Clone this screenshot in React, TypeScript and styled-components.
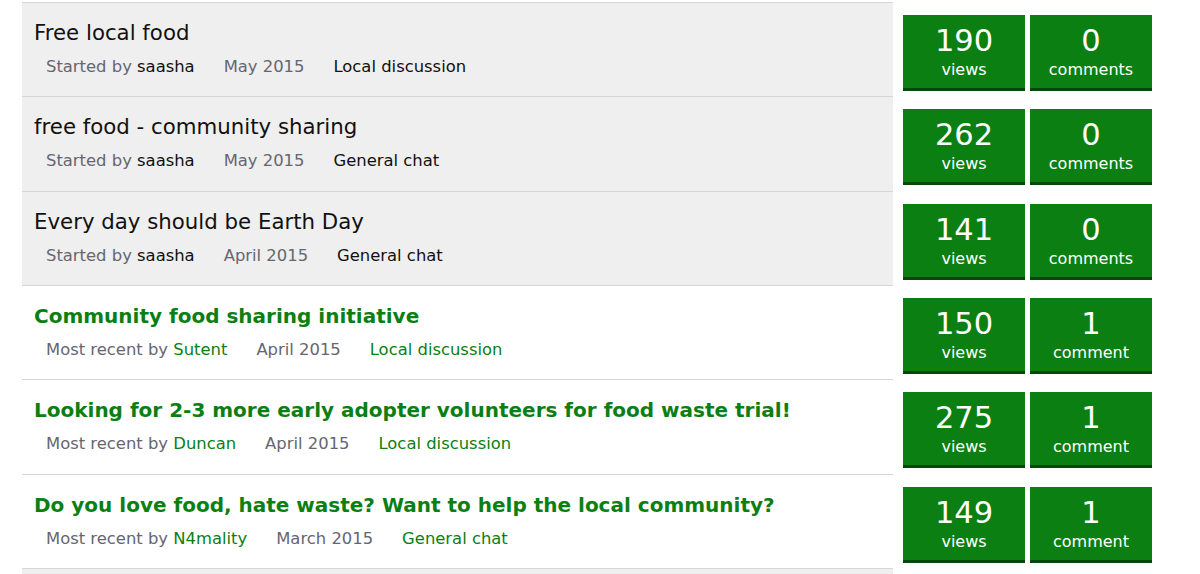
import styled, { createGlobalStyle } from "styled-components";

type Topic = {
  title: string;
  lead: string;
  author: string;
  date: string;
  category: string;
  views: number;
  comments: number;
  recent?: boolean;
};

const topics: Topic[] = [
  { title: "Free local food", lead: "Started by", author: "saasha", date: "May 2015", category: "Local discussion", views: 190, comments: 0 },
  { title: "free food - community sharing", lead: "Started by", author: "saasha", date: "May 2015", category: "General chat", views: 262, comments: 0 },
  { title: "Every day should be Earth Day", lead: "Started by", author: "saasha", date: "April 2015", category: "General chat", views: 141, comments: 0 },
  { title: "Community food sharing initiative", lead: "Most recent by", author: "Sutent", date: "April 2015", category: "Local discussion", views: 150, comments: 1, recent: true },
  { title: "Looking for 2-3 more early adopter volunteers for food waste trial!", lead: "Most recent by", author: "Duncan", date: "April 2015", category: "Local discussion", views: 275, comments: 1, recent: true },
  { title: "Do you love food, hate waste? Want to help the local community?", lead: "Most recent by", author: "N4mality", date: "March 2015", category: "General chat", views: 149, comments: 1, recent: true },
  { title: "", lead: "", author: "", date: "", category: "", views: 0, comments: 0 },
];

const GREEN = "#0b7f12";

const Global = createGlobalStyle`
  html, body { margin: 0; padding: 0; background: #fff; }
  body { font-family: "DejaVu Sans", Verdana, sans-serif; overflow: hidden; }
`;

const List = styled.div`
  display: flex;
  flex-direction: column;
  height: 100vh;
  box-sizing: border-box;
  overflow: hidden;
  padding: 2px 0 0 22px;
`;

const Row = styled.div`
  display: flex;
  flex-shrink: 0;
  height: 94.33px;
`;

const Main = styled.div<{ $recent?: boolean }>`
  width: 871px;
  box-sizing: border-box;
  border-top: 1.5px solid #d6d6d6;
  background: ${(p) => (p.$recent ? "#fff" : "#efefef")};
  padding: 16px 0 0 12px;
`;

const Title = styled.div<{ $recent?: boolean }>`
  font-size: ${(p) => (p.$recent ? "20px" : "21.3px")};
  line-height: 28px;
  color: ${(p) => (p.$recent ? GREEN : "#111")};
  font-weight: ${(p) => (p.$recent ? "bold" : "normal")};
  white-space: nowrap;
`;

const Meta = styled.div`
  display: flex;
  gap: 29px;
  margin: 9px 0 0 12px;
  font-size: 16.4px;
  line-height: 22px;
  color: #666670;
  white-space: nowrap;
`;

const Author = styled.span<{ $recent?: boolean }>`
  color: ${(p) => (p.$recent ? GREEN : "#111")};
`;

const Stats = styled.div`
  display: flex;
  gap: 5px;
  padding: 13px 0 0 10px;
`;

const Stat = styled.div`
  width: 122px;
  height: 76px;
  box-sizing: border-box;
  background: ${GREEN};
  border-bottom: 3px solid #05480a;
  color: #fff;
  display: flex;
  flex-direction: column;
  align-items: center;
  padding-top: 7px;
`;

const Num = styled.div`
  font-size: 30.5px;
  line-height: 38px;
`;

const Label = styled.div`
  font-size: 16px;
  line-height: 20px;
`;

export default function App() {
  return (
    <>
      <Global />
      <List>
        {topics.map((t, i) => (
          <Row key={i}>
            <Main $recent={t.recent}>
              {t.title && (
                <>
                  <Title $recent={t.recent}>{t.title}</Title>
                  <Meta>
                    <span>
                      {t.lead} <Author $recent={t.recent}>{t.author}</Author>
                    </span>
                    <span>{t.date}</span>
                    <Author $recent={t.recent}>{t.category}</Author>
                  </Meta>
                </>
              )}
            </Main>
            {t.title && (
              <Stats>
                <Stat>
                  <Num>{t.views}</Num>
                  <Label>views</Label>
                </Stat>
                <Stat>
                  <Num>{t.comments}</Num>
                  <Label>{t.comments === 1 ? "comment" : "comments"}</Label>
                </Stat>
              </Stats>
            )}
          </Row>
        ))}
      </List>
    </>
  );
}
